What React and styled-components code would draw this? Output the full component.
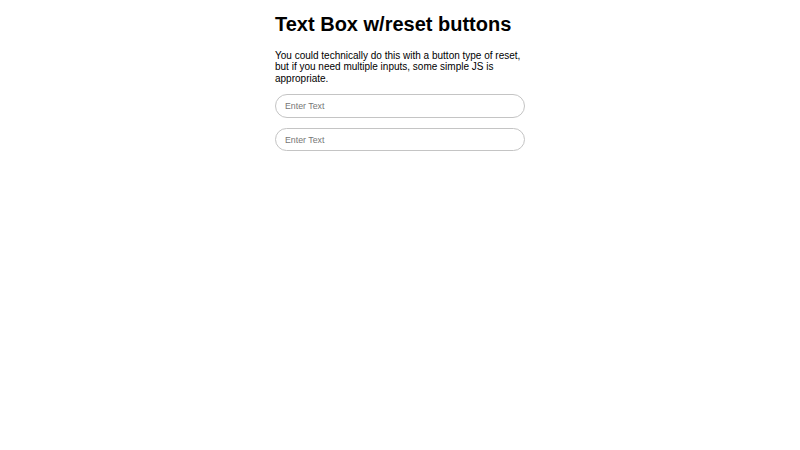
import React from 'react'
import styled, { createGlobalStyle } from 'styled-components'

const GlobalStyle = createGlobalStyle`
  html, body {
    margin: 0;
    padding: 0;
    background: #fff;
  }
  body {
    font-family: 'Liberation Sans', Arial, sans-serif;
    color: #000;
  }
`

const Wrapper = styled.main`
  width: 250px;
  margin: 0 auto;
  padding-top: 13.4px;
`

const Title = styled.h1`
  font-size: 20px;
  font-weight: bold;
  line-height: 23px;
  margin: 0 0 13.4px;
`

const Intro = styled.p`
  font-size: 10px;
  line-height: 11.5px;
  margin: 0 0 10px;
`

const Field = styled.input`
  display: block;
  box-sizing: border-box;
  width: 250px;
  height: 23.6px;
  margin: 0 0 10px;
  padding: 0 9px;
  border: 1px solid #c4c4c4;
  border-radius: 12px;
  font-family: 'Liberation Sans', Arial, sans-serif;
  font-size: 8.8px;
  color: #222;
  background: #fff;
  outline: none;

  &::placeholder {
    color: #767676;
  }
`

export default function App() {
  return (
    <>
      <GlobalStyle />
      <Wrapper>
        <Title>Text Box w/reset buttons</Title>
        <Intro>
          You could technically do this with a button type of reset, but if you
          need multiple inputs, some simple JS is appropriate.
        </Intro>
        <Field type="text" placeholder="Enter Text" />
        <Field type="text" placeholder="Enter Text" />
      </Wrapper>
    </>
  )
}
